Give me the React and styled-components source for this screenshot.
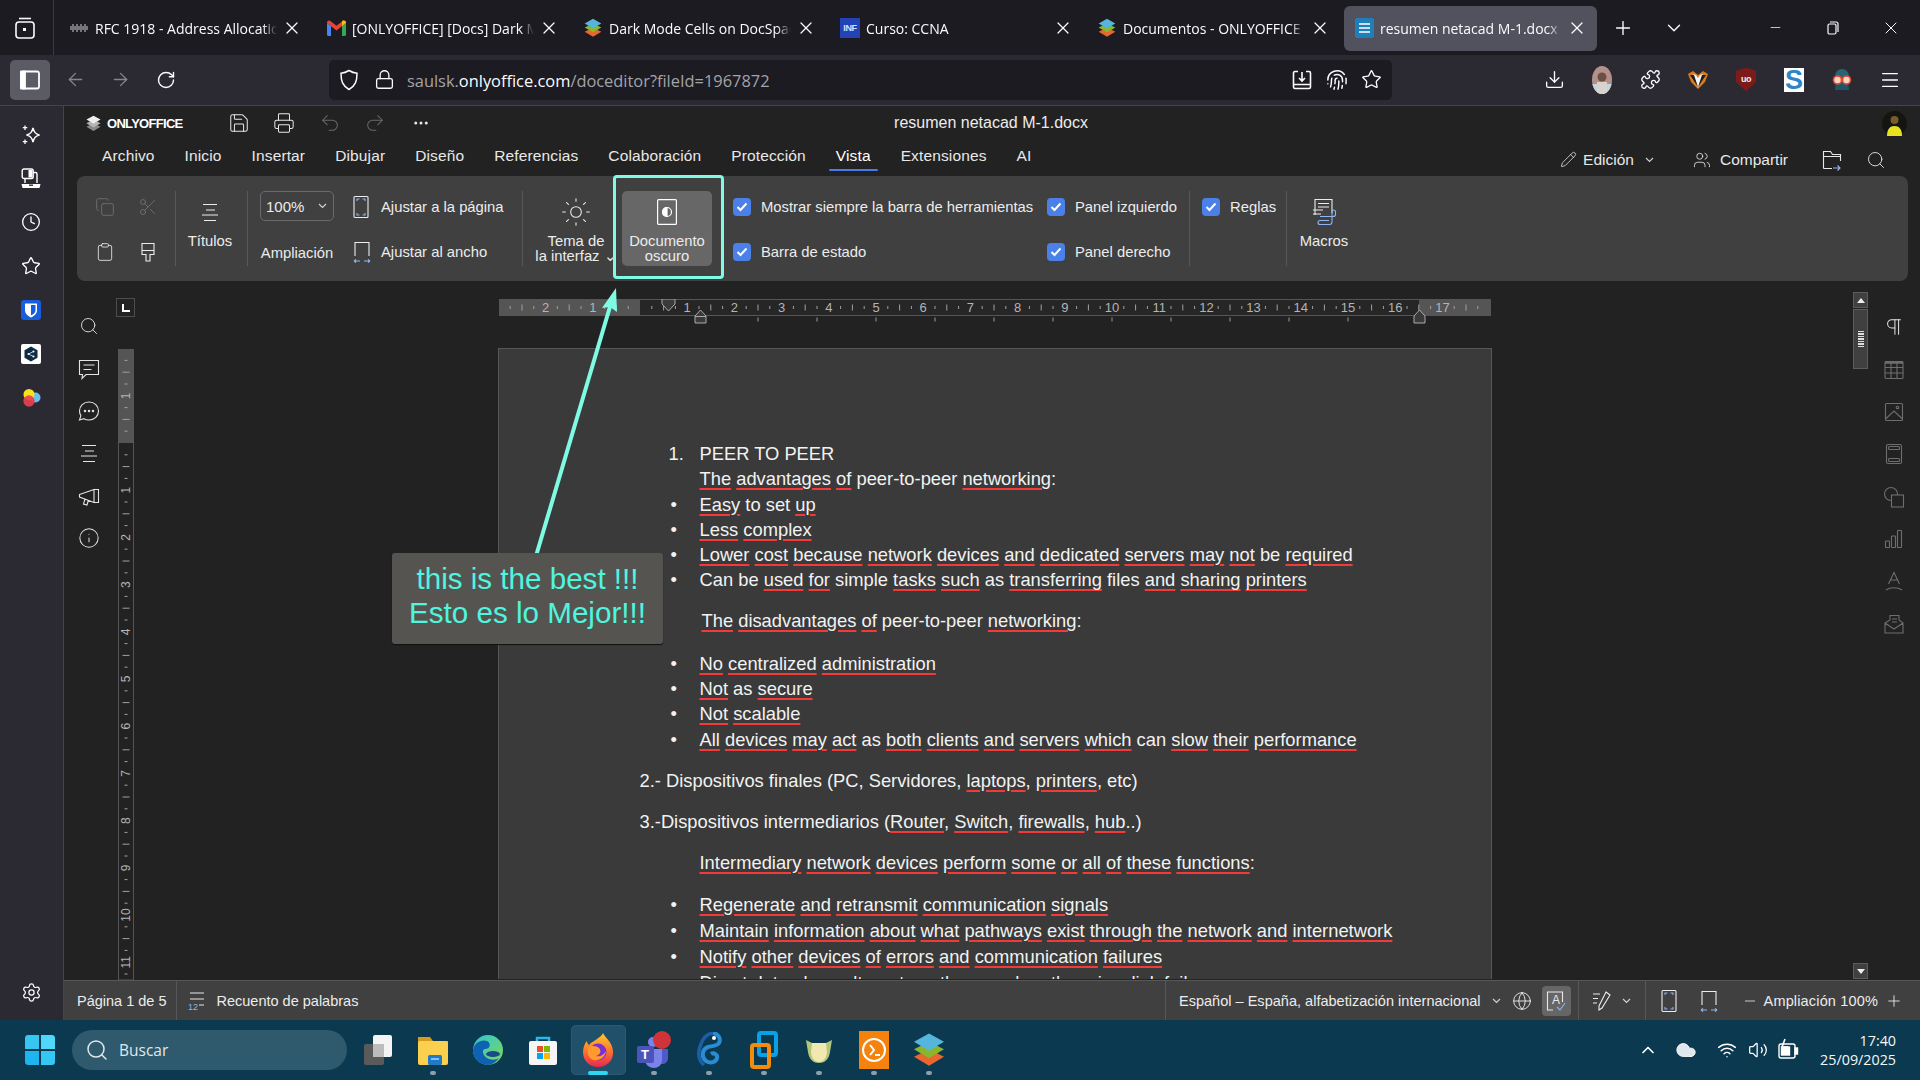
import React from "react";
import styled, { createGlobalStyle } from "styled-components";
import {
  ArrowLeft, ArrowRight, RotateCw, Lock, Fingerprint, Star, Download, Puzzle, Menu as MenuIcon, X, Plus,
  ChevronDown, ChevronUp, Minus, Save, Printer, Undo2, Redo2, Ellipsis, Search, Pencil, Users,
  Info, Settings, Clock, Globe, Wifi, Volume2, Cloud,
  Copy, Scissors, Clipboard, Sun, Pilcrow,
} from "lucide-react";

const Global = createGlobalStyle`
  html, body { margin: 0; padding: 0; background: #1c1b22; }
  * { box-sizing: border-box; }
  body { font-family: "Liberation Sans", Arial, sans-serif; color: #fff; }
`;

const Shell = styled.div`
  position: relative; width: 1920px; height: 1080px; overflow: hidden;
  display: flex; flex-direction: column; background: #1c1b22;
`;

/* ---------- browser tab strip ---------- */
const TabStrip = styled.div`
  height: 55px; flex: none; display: flex; align-items: center; background: #1c1b22;
  font-family: "Open Sans", sans-serif; font-size: 14px; color: #fbfbfe;
`;
const TabListBtn = styled.div`
  width: 54px; height: 55px; flex: none; display: flex; align-items: center; justify-content: center;
  border-right: 1px solid #3a3a42; padding-right: 3px;
`;
const Tabs = styled.div`display: flex; gap: 4px; margin-left: 5px; height: 45px; margin-top: 1px;`;
const Tab = styled.div`
  width: 253px; height: 45px; display: flex; align-items: center; gap: 6px; padding: 0 10px 0 ${p => p.$pad || 10}px;
  border-radius: 6px; background: ${p => (p.$active ? "#52525e" : "transparent")};
`;
const TabIcon = styled.span`width: 20px; height: 20px; flex: none; display: flex; align-items: center; justify-content: center;`;
const TabTitle = styled.span`
  flex: 1; min-width: 0; white-space: nowrap; overflow: hidden;
  -webkit-mask-image: linear-gradient(to right, #000 calc(100% - 14px), transparent);
  mask-image: linear-gradient(to right, #000 calc(100% - 14px), transparent);
`;
const TabClose = styled.span`flex: none; display: flex; margin-left: -1px;`;
const WinControls = styled.div`display: flex; align-items: center; height: 100%; margin-left: auto;`;
const StripBtn = styled.span`display: flex; align-items: center; justify-content: center; width: ${p => p.$w}px; margin-left: ${p => p.$ml || 0}px;`;

/* ---------- nav row ---------- */
const NavRow = styled.div`
  height: 51px; flex: none; display: flex; align-items: center; background: #2b2a33;
  border-bottom: 1px solid #45444d; padding-bottom: 1px;
`;
const SideToggle = styled.div`
  width: 40px; height: 40px; margin-left: 10px; border-radius: 5px; background: #5b5b66; margin-right: 3px;
  display: flex; align-items: center; justify-content: center;
`;
const NavBtn = styled.span`
  width: 45px; flex: none; display: flex; align-items: center; justify-content: center;
  color: ${p => (p.$dim ? "#85858c" : "#fbfbfe")};
`;
const UrlBar = styled.div`
  margin-left: 141px; width: 1063px; height: 40px; flex: none; background: #1c1b22; border-radius: 5px;
  display: flex; align-items: center; padding-left: 10px; color: #fbfbfe;
  font-family: "Open Sans", sans-serif; font-size: 16.4px;
`;
const UrlLead = styled.span`width: ${p => p.$w}px; flex: none; display: flex; justify-content: center;`;
const UrlText = styled.span`flex: 1; color: #a3a3a8; margin-left: -2px; padding-top: 2px; b { font-weight: 400; color: #fbfbfe; }`;
const ExtBtn = styled.span`width: ${p => p.$w || 48}px; flex: none; display: flex; justify-content: center; align-items: center;`;
const ExtRow = styled.div`display: flex; align-items: center; margin-left: 138px;`;

/* ---------- main area ---------- */
const Main = styled.div`flex: 1; min-height: 0; display: flex;`;
const BrowserRail = styled.div`
  width: 64px; flex: none; background: #2b2a33; display: flex; flex-direction: column; padding: 6px 0; border-right: 1px solid #45444d;
`;
const RailItem = styled.div`
  height: 44px; flex: none; display: flex; align-items: center; justify-content: center; margin-right: 1px;
  &:last-child { margin-top: auto; }
`;
const Editor = styled.div`flex: 1; min-width: 0; display: flex; flex-direction: column; background: #222222;`;

const Header = styled.div`
  height: 34px; flex: none; display: grid; grid-template-columns: 1fr auto 1fr; align-items: center; padding: 0 21px;
`;
const HeadLeft = styled.div`display: flex; align-items: center;`;
const Logo = styled.div`
  width: 131px; flex: none; display: flex; align-items: center; gap: 5px;
  font-size: 13px; font-weight: 700; letter-spacing: -0.7px; color: #fff;
`;
const HeadBtn = styled.span`width: 45.5px; flex: none; display: flex; justify-content: center; color: ${p => (p.$dim ? "#6a6a6a" : "#e8e8e8")};`;
const DocTitle = styled.div`font-size: 16px; color: #ececec; margin-right: 2px;`;
const HeadRight = styled.div`display: flex; justify-content: flex-end; margin-right: -8px;`;

const MenuBar = styled.div`height: 36px; flex: none; display: flex; align-items: flex-start; padding: 0 34px 0 23px; font-size: 15.5px; letter-spacing: .13px;`;
const MenuItem = styled.div`
  position: relative; height: 31px; padding: 0 15px; display: flex; align-items: center; color: ${p => (p.$active ? "#ffffff" : "#e8e8e8")};
  ${p => p.$active && `
    &::after { content: ""; position: absolute; left: 8px; right: 8px; bottom: 0; height: 2.5px; background: #4a7be8; border-radius: 2px; }
  `}
`;
const MenuRight = styled.div`
  margin-left: auto; height: 36px; display: flex; align-items: center; color: #e8e8e8; padding-top: 3px; letter-spacing: 0; font-size: 15.5px;
`;
const RightBtn = styled.span`display: flex; align-items: center; gap: ${p => p.$gap || 0}px; margin-left: ${p => p.$ml || 0}px;`;

/* ---------- toolbar panel ---------- */
const Panel = styled.div`
  height: 105px; flex: none; margin: 0 12px 0 13px; border-radius: 8px; background: #404040; display: flex;
  padding: 15px 0 13px; font-size: 14.8px; color: #ececec;
`;
const Sep = styled.div`width: 1px; height: 75px; flex: none; background: #585858;`;
const IconGrid = styled.div`
  width: 98px; flex: none; padding-left: 6px; display: grid; grid-template-columns: 43px 43px; grid-template-rows: 32px 32px; row-gap: 13px;
`;
const Cell = styled.div`display: flex; align-items: center; justify-content: center; color: ${p => (p.$dim ? "#727272" : "#ececec")};`;
const BigBtn = styled.div`
  width: ${p => p.$w}px; flex: none; margin-left: ${p => p.$ml || 0}px; padding-right: ${p => p.$pr || 0}px; height: 75px; padding-top: 5px; border-radius: 5px;
  display: flex; flex-direction: column; align-items: center; text-align: center; line-height: 15px; white-space: nowrap;
  background: ${p => (p.$on ? "#676767" : "transparent")};
`;
const BigIcon = styled.div`height: 32px; flex: none; display: flex; align-items: center; justify-content: center; margin-bottom: 6px;`;
const ZoomGroup = styled.div`
  width: 274px; flex: none; padding-left: 12px; display: grid; grid-template-columns: 74px 1fr; column-gap: 19px; grid-template-rows: 32px 32px; row-gap: 13px;
`;
const ZoomSel = styled.div`
  height: 30px; border: 1px solid #6a6a6a; border-radius: 5px; display: flex; align-items: center; justify-content: space-between; padding: 0 6px 0 5px; font-size: 15px;
`;
const ZoomLabel = styled.div`display: flex; align-items: center; justify-content: center; white-space: nowrap; margin-top: 2px;`;
const FitRow = styled.div`display: flex; align-items: center; gap: ${p => p.$gap || 12}px; white-space: nowrap;`;
const CheckGrid = styled.div`
  margin-left: 21px; width: 456px; flex: none; display: grid; grid-template-columns: 314px 142px; grid-template-rows: 32px 32px; row-gap: 13px;
`;
const CheckRow = styled.div`display: flex; align-items: center; gap: 10px; white-space: nowrap; height: 32px;`;
const Box = styled.span`
  width: 18px; height: 18px; flex: none; border-radius: 4px; background: #4a80e8; display: flex; align-items: center; justify-content: center;
`;
const RulesCol = styled.div`width: 96px; flex: none; padding-left: 12px;`;

/* ---------- workspace ---------- */
const Workspace = styled.div`flex: 1; min-height: 0; display: flex;`;
const LeftRail = styled.div`width: 50px; flex: none; padding-top: 24px; display: flex; flex-direction: column;`;
const SideIcon = styled.div`
  height: 42.4px; flex: none; display: flex; align-items: center; justify-content: center; color: ${p => (p.$dim ? "#6e6e6e" : "#e4e4e4")};
`;
const Canvas = styled.div`flex: 1; min-width: 0; display: flex;`;
const CanvasMain = styled.div`
  flex: 1; min-width: 0; padding-left: 2px; display: grid; grid-template-columns: 20px 1fr; grid-template-rows: 68px 631px;
`;
const Corner = styled.div`
  width: 19px; height: 19px; margin-top: 17px; border: 1px solid #4d4d4d; display: flex; align-items: center; justify-content: center;
`;
const CornerMark = styled.span`width: 8px; height: 8px; border-left: 2px solid #fff; border-bottom: 2px solid #fff;`;
const RulerWrap = styled.div`justify-self: center; padding-top: 18px;`;
const VRuler = styled.div`margin-left: 2px; width: 16px; height: 631px; overflow: hidden;`;
const PageWrap = styled.div`display: flex; justify-content: center; overflow: hidden; height: 631px; margin-top: -1px;`;
const Page = styled.div`
  width: 994px; height: 700px; flex: none; background: #3a3a3a; border: 1px solid #575757; padding: 92px 0 0 141px;
  font-size: 18.33px; line-height: 25.3px; color: #f2f2f2; white-space: nowrap;
`;
const DocLine = styled.div`
  display: flex; margin-top: ${p => p.$mt || 0}px; padding-left: ${p => p.$pl || 0}px;
`;
const Marker = styled.span`width: 60px; flex: none; padding-left: ${p => p.$ml || 30}px;`;
const Bad = styled.span`
  text-decoration: underline; text-decoration-color: #f23a3a; text-decoration-thickness: 1.5px; text-underline-offset: 2.5px;
`;
const Scroll = styled.div`width: 15px; flex: none; padding: 11px 0 1px; display: flex; flex-direction: column;`;
const ScrollBtn = styled.div`
  width: 15px; height: 16px; flex: none; background: #404040; border: 1px solid #5c5c5c; display: flex; align-items: center; justify-content: center;
  margin-top: ${p => (p.$end ? "auto" : "0")};
`;
const ScrollArrow = styled.span`
  width: 0; height: 0; border-left: 4px solid transparent; border-right: 4px solid transparent;
  ${p => (p.$down ? "border-top: 5px solid #eee;" : "border-bottom: 5px solid #eee;")}
`;
const ScrollThumb = styled.div`
  height: 60px; flex: none; margin-top: 1px; background: #404040; border: 1px solid #5c5c5c; display: flex; flex-direction: column; align-items: center; justify-content: center; gap: 1.3px;
`;
const Grip = styled.span`width: 6px; height: 1.2px; background: #ddd;`;
const RightRail = styled.div`width: 52px; flex: none; padding-top: 25px; display: flex; flex-direction: column;`;

/* ---------- status bar ---------- */
const StatusBar = styled.div`
  height: 40px; flex: none; background: #404040; border-top: 1px solid #575757; display: flex; align-items: center; font-size: 14.5px; color: #ececec;
`;
const StatusText = styled.span`margin-left: ${p => p.$ml || 0}px; white-space: nowrap; letter-spacing: ${p => p.$ls || 0}px;`;
const StatusSep = styled.span`width: 1px; height: 39px; flex: none; background: #575757; margin-left: ${p => p.$ml || 0}px;`;
const StatusIcon = styled.span`
  flex: none; display: flex; align-items: center; justify-content: center; width: ${p => p.$w || 24}px; margin-left: ${p => p.$ml || 0}px;
`;
const SpellBtn = styled.span`
  width: 29px; height: 30px; flex: none; margin-left: ${p => p.$ml || 0}px; border-radius: 4px; background: #666; display: flex; align-items: center; justify-content: center;
`;
const StatusRight = styled.div`margin-left: auto; display: flex; align-items: center; height: 100%; padding-right: 14px;`;

/* ---------- taskbar ---------- */
const Taskbar = styled.div`
  height: 60px; flex: none; background: #0b3a50; display: flex; align-items: center; color: #fff;
`;
const WinBtn = styled.span`margin-left: 25px; display: flex;`;
const SearchPill = styled.div`
  width: 275px; height: 40px; margin-left: 17px; border-radius: 20px; background: #2f5a6d; display: flex; align-items: center; padding-left: 13px; gap: 10px;
  font-family: "Open Sans", sans-serif; font-size: 15.5px; color: #dfe8ec;
`;
const TaskIcons = styled.div`display: flex; margin-left: 3px; align-items: center; height: 100%;`;
const TaskIcon = styled.div`
  position: relative; width: 55.2px; height: 50px; flex: none; display: flex; align-items: center; justify-content: center; border-radius: 5px;
  ${p => p.$on && "background: #21506a; outline: 1px solid #2c5a72; outline-offset: -1px;"}
`;
const TaskDot = styled.span`
  position: absolute; bottom: 0; left: 50%; transform: translateX(-50%); height: 4px; border-radius: 2px;
  width: ${p => (p.$on ? 20 : 6)}px; background: ${p => (p.$on ? "#2fd6f2" : "#8aa0ab")};
`;
const Tray = styled.div`margin-left: auto; display: flex; align-items: center; padding-right: 24px;`;
const TrayIcon = styled.span`display: flex; justify-content: center; width: ${p => p.$w}px;`;
const Clockbox = styled.div`
  margin-left: 18px; text-align: right; font-family: "Open Sans", sans-serif; font-size: 14.3px; line-height: 19.5px; color: #f4f7f8;
`;

/* ---------- annotation overlay ---------- */
const Highlight = styled.div`
  position: absolute; left: 613px; top: 175px; width: 111px; height: 104px; border: 3.5px solid #7ffbe4; border-radius: 4px;
`;
const ArrowSvg = styled.svg`position: absolute; left: 520px; top: 280px;`;
const Callout = styled.div`
  position: absolute; left: 392px; top: 553px; width: 271px; height: 91px; background: #555450; border-radius: 3px; padding-bottom: 5px;
  box-shadow: 0 1px 1px #111; display: flex; flex-direction: column; align-items: center; justify-content: center;
  font-size: 29.6px; line-height: 34px; color: #4ff5de; white-space: nowrap;
`;

/* ---------- drawings ---------- */
const Stack = ({ s = 22, mono }) => (
  <svg width={s} height={s} viewBox="0 0 24 24">
    <path d="M2 16.500L7 14l5 2.500 5-2.500 5 2.500-10 6z" fill={mono ? "#8a8a8a" : "#e8662f"} />
    <path d="M2 11.500L7 9l5 2.500L17 9l5 2.500-10 6z" fill={mono ? "#b5b5b5" : "#8ab62f"} />
    <path d="M2 6.500L12 1l10 5.500-10 6z" fill={mono ? "#eeeeee" : "#55b5dd"} />
  </svg>
);
const Gmail = () => (
  <svg width="19" height="16" viewBox="0 0 19 16">
    <path d="M0 3v11.500A1.500 1.500 0 0 0 1.500 16H4V6z" fill="#4285f4" />
    <path d="M15 6v10h2.500a1.500 1.500 0 0 0 1.500-1.500V3z" fill="#34a853" />
    <path d="M0 2.500C0 .8 2 0 3 .8l6.500 5L16 .8c1-.8 3 0 3 1.700V3l-3.900 3L9.500 10.500 4 6.300 0 3z" fill="#ea4335" />
    <path d="M15 .8h1c1-.8 3 0 3 1.700V3l-4 3z" fill="#fbbc04" />
  </svg>
);
const Rfc = () => (
  <svg width="18" height="10" viewBox="0 0 18 10" stroke="#cfcfcf" strokeWidth="1">
    {[1, 3, 5, 7, 9, 11, 13, 15, 17].map((x, i) => (<path key={x} d={`M${x} ${i % 2 ? 1 : 3}V${i % 2 ? 9 : 7}`} />))}
  </svg>
);
const InfBadge = styled.span`
  width: 20px; height: 20px; background: #2242b8; color: #d8e2ff; font: 700 9px "Liberation Sans", sans-serif; display: flex; align-items: center; justify-content: center; letter-spacing: -0.3px;
`;
const DocFav = () => (
  <svg width="19" height="20" viewBox="0 0 19 20">
    <rect width="19" height="20" rx="2" fill="#1f7fb8" />
    <path d="M4 6h11M4 10h11M4 14h11" stroke="#fff" strokeWidth="1.5" />
  </svg>
);
const ListTabs = () => (
  <svg width="20" height="22" viewBox="0 0 20 22" fill="none" stroke="#fbfbfe" strokeWidth="1.6">
    <rect x="1" y="5" width="18" height="16" rx="3" /><path d="M4 1.500h12" /><rect x="8" y="11" width="3" height="3" fill="#fbfbfe" stroke="none" />
  </svg>
);
const SideGlyph = () => (
  <svg width="20" height="20" viewBox="0 0 20 20" fill="none" stroke="#fff" strokeWidth="1.8">
    <rect x="1" y="1.500" width="18" height="17" rx="2" /><rect x="1" y="1.500" width="4" height="17" fill="#fff" />
  </svg>
);
const Shield = ({ c = "#fbfbfe" }) => (
  <svg width="20" height="22" viewBox="0 0 20 22" fill="none" stroke={c} strokeWidth="1.5">
    <path d="M10 1.500c3 1.800 5 2.400 8 2.700 0 8-1.500 12.500-8 16.300C3.500 16.700 2 12.200 2 4.200c3-.3 5-.9 8-2.700z" />
  </svg>
);
const Install = () => (
  <svg width="20" height="20" viewBox="0 0 20 20" fill="none" stroke="#fbfbfe" strokeWidth="1.600">
    <path d="M6 1.500H3A1.500 1.500 0 0 0 1.500 3v14A1.500 1.500 0 0 0 3 18.500h14a1.500 1.500 0 0 0 1.500-1.500V3A1.500 1.500 0 0 0 17 1.500h-3M1.500 14.500h17" />
    <path d="M10 2v8M7 8l3 3 3-3" />
  </svg>
);
const RestoreIcon = () => (
  <svg width="14" height="14" viewBox="0 0 14 14" fill="none" stroke="#fbfbfe" strokeWidth="1.200">
    <rect x="2" y="3" width="8" height="10" rx="1.500" /><path d="M4 1h6a2 2 0 0 1 2 2v8" />
  </svg>
);
const Badger = () => (
  <svg width="22" height="22" viewBox="0 0 22 22">
    <path d="M1 5l5-3 5 4 5-4 5 3-3 8-7 7-7-7z" fill="#d97a1f" />
    <path d="M6 5l5 14 5-14-3 1-2 3-2-3z" fill="#f5f5f5" /><path d="M3 6l4 0 4 12z" fill="#1d1d1d" /><path d="M19 6h-4l-4 12z" fill="#1d1d1d" />
  </svg>
);
const UBlock = styled.span`
  width: 20px; height: 24px; background: #7d1a1a; clip-path: polygon(50% 0, 100% 14%, 100% 60%, 50% 100%, 0 60%, 0 14%);
  font: 700 9px "Liberation Sans", sans-serif; color: #eee; display: flex; justify-content: center; padding-top: 6px; letter-spacing: -.5px;
`;
const SBadge = styled.span`
  width: 20px; height: 24px; background: #fff; color: #2f86c6; font: 900 27px/24px "Liberation Sans", sans-serif; text-align: center; overflow: hidden;
`;
const Glasses = () => (
  <svg width="22" height="24" viewBox="0 0 22 24">
    <path d="M4 22c0-6 1-8 7-8s7 2 7 8z" fill="#1f5566" /><circle cx="11" cy="8" r="7" fill="#2a6474" />
    <circle cx="6.500" cy="12" r="4" fill="#fbd3c2" stroke="#e04b2e" strokeWidth="1.600" /><circle cx="15.500" cy="12" r="4" fill="#fbd3c2" stroke="#e04b2e" strokeWidth="1.600" />
  </svg>
);
const PersonPhoto = () => (
  <svg width="20" height="28" viewBox="0 0 20 28">
    <defs><clipPath id="ph"><ellipse cx="10" cy="14" rx="10" ry="14" /></clipPath></defs>
    <g clipPath="url(#ph)"><rect width="20" height="28" fill="#b3918a" /><rect y="18" width="20" height="10" fill="#c7d4dc" /><circle cx="10" cy="11" r="4.500" fill="#6c4f42" /><rect x="5" y="16" width="10" height="12" fill="#d9d3cd" /></g>
  </svg>
);
const Bitwarden = () => (
  <svg width="20" height="20" viewBox="0 0 20 20">
    <rect width="20" height="20" rx="3" fill="#175ddc" /><path d="M4 3.500h12v7c0 3.500-3 5.500-6 7-3-1.500-6-3.500-6-7z" fill="#fff" /><path d="M10 5h4.500v5.500c0 2.300-2.200 3.800-4.500 5z" fill="#175ddc" />
  </svg>
);
const DeepL = () => (
  <svg width="20" height="20" viewBox="0 0 20 20">
    <rect width="20" height="20" rx="2" fill="#fff" /><path d="M10 2.500l6.500 3.700v7.600L10 17.500l-6.500-3.700V6.200z" fill="#0f2b46" />
    <circle cx="7.500" cy="10" r="1" fill="#fff" /><circle cx="12.500" cy="7.500" r="1" fill="#fff" /><circle cx="12.500" cy="12.500" r="1" fill="#fff" /><path d="M7.500 10l5-2.500M7.500 10l5 2.500" stroke="#fff" strokeWidth=".7" />
  </svg>
);
const Tricolor = () => (
  <svg width="20" height="20" viewBox="0 0 20 20">
    <circle cx="14.500" cy="9.500" r="5" fill="#67c0ef" /><circle cx="8" cy="6.500" r="5.500" fill="#f7e21f" /><circle cx="8" cy="13" r="5.700" fill="#e8404f" opacity=".92" />
  </svg>
);
const TabSync = () => (
  <svg width="20" height="21" viewBox="0 0 20 21" fill="none" stroke="#fff" strokeWidth="1.400">
    <rect x="1.200" y="1" width="11" height="9.500" rx="1.800" /><rect x="7.500" y="2" width="4" height="7.500" fill="#fff" stroke="none" />
    <path d="M12 4.500h2.500a1.500 1.500 0 0 1 1.500 1.500v9M4 10.500V15" /><path d="M.5 16h19l-1 4H1.500z" fill="#fff" stroke="none" /><rect x="8" y="16.500" width="4" height="1.400" fill="#2b2a33" stroke="none" />
  </svg>
);
const Spark4 = () => (
  <svg width="21" height="21" viewBox="0 0 21 21" fill="none" stroke="#fff" strokeWidth="1.500">
    <path d="M12 4c1 4.500 2.500 6 6.500 7-4 1-5.500 2.500-6.500 7-1-4.500-2.500-6-6.500-7 4-1 5.500-2.500 6.500-7z" />
    <path d="M4 1.500v4.500M1.800 3.700h4.500M4 15.500v4.500M1.800 17.700h4.500" strokeWidth="1.300" />
  </svg>
);

const Ln = ({ w = 22, h = 22, sw = 1.100, c = "currentColor", children }) => (
  <svg width={w} height={h} viewBox={`0 0 ${w} ${h}`} fill="none" stroke={c} strokeWidth={sw}>{children}</svg>
);
const Blue = "#8fb4ee";
const AlignGlyph = () => (<Ln><path d="M4 3.500h14M7 9h9M3 14h16M5 19.500h12" /></Ln>);
const Brush = () => (<Ln w={18} h={22}><path d="M3 2.500h12v11H11v6.500H7v-6.500H3zM3 9.500h12" /></Ln>);
const FitPage = ({ c = "currentColor" }) => (
  <Ln w={16} h={24} c={c}><rect x="1" y="1.500" width="14" height="21" rx="1" /><path d="M4 6V4h2.500M12 6V4H9.500M4 18v2h2.500M12 18v2H9.500" stroke={Blue} /></Ln>
);
const FitWidth = ({ c = "currentColor" }) => (
  <Ln w={18} h={24} c={c}><path d="M2 16V2.500h14V16" /><path d="M1 21h6M1 21l2-1.700M1 21l2 1.700M17 21h-6M17 21l-2-1.700M17 21l-2 1.700" stroke={Blue} /></Ln>
);
const Contrast = () => (
  <svg width="20" height="26" viewBox="0 0 20 26" fill="none" stroke="#fff" strokeWidth="1.200">
    <rect x=".6" y=".6" width="18.800" height="24.800" rx="1" /><circle cx="10" cy="13" r="4.500" /><path d="M10 8.500a4.500 4.500 0 0 0 0 9z" fill="#fff" />
  </svg>
);
const MacroGlyph = () => (
  <Ln w={26} h={30}>
    <path d="M4 18V2.500h17V16" /><path d="M7 6.500h11M7 10h11M2 13h10M2 17h8" />
    <path d="M9 19.500h13c1.500 0 2.500-.8 2.500-2v-3c0-1-.8-1.500-2-1.500S21 14 21 15.500V25c0 1.500-1 2.500-2.500 2.500H9c-1.500 0-2-1-2-2 0-1 .5-2 2-2h9" stroke={Blue} />
  </Ln>
);
const Check = () => (<svg width="12" height="10" viewBox="0 0 12 10" fill="none" stroke="#fff" strokeWidth="2"><path d="M1.500 5l3 3 6-6.500" /></svg>);
const ChevSmall = () => (<svg width="9" height="6" viewBox="0 0 9 6" fill="none" stroke="#d0d0d0" strokeWidth="1.200"><path d="M1 1l3.500 3.500L8 1" /></svg>);
const FolderShare = () => (
  <Ln w={20} h={22}><path d="M1.500 19.500V2.500h7l2 3h8V12M1.500 7.500h17M1.500 19.500H10" /><path d="M11 19h7M15.500 16.500L18 19l-2.500 2.500" stroke={Blue} /></Ln>
);
const CommentGlyph = () => (<Ln><path d="M1.500 2.500h19v14H8l-4 4 .5-4h-3zM5.500 7h11M5.500 11.500h8" /></Ln>);
const ChatGlyph = () => (
  <Ln><path d="M11 2c5.500 0 9.500 4 9.500 9s-4 9-9.500 9c-2 0-3.500-.4-5-1.300L1.500 20l1.400-4.300A9 9 0 0 1 1.500 11C1.500 6 5.500 2 11 2z" /><circle cx="7" cy="11" r=".7" fill="currentColor" /><circle cx="11" cy="11" r=".7" fill="currentColor" /><circle cx="15" cy="11" r=".7" fill="currentColor" /></Ln>
);
const HornGlyph = () => (<Ln><path d="M1.500 9.500L16 4.500v13l-14.500-5.500zM16 4.500h4.500v13H16M7 14l-1.500 5 3.500 1 1.300-4.500" /></Ln>);
const MailGlyph = () => (<Ln><path d="M2 10l5-3v-4.500h9V7l4 3v10H2zM2 10l9 6 9-6M9 6h5M9 9h5" /></Ln>);
const TableGlyph = () => (<Ln w={20} h={20}><rect x="1" y="1.500" width="18" height="17" rx="1" /><path d="M1 7.500h18M1 13h18M7 2v16M13 2v16" /><path d="M1 2.500h18" strokeWidth="2.500" /></Ln>);
const ImageGlyph = () => (<Ln w={20} h={20}><rect x="1.500" y="1.500" width="17" height="17" rx="1" /><path d="M1.500 17L10 9l8.500 8" /><circle cx="13.500" cy="5.500" r="1.300" /></Ln>);
const HeaderGlyph = () => (<Ln w={18} h={22}><rect x="1.500" y="1.500" width="15" height="19" rx="1.500" /><rect x="3.500" y="3.500" width="11" height="3" rx="1" /><rect x="3.500" y="15.500" width="11" height="3" rx="1" /></Ln>);
const ShapeGlyph = () => (<Ln><circle cx="8" cy="8" r="6.500" /><rect x="8.500" y="9" width="12" height="12" fill="#222" /></Ln>);
const ChartGlyph = () => (<Ln w={20} h={20}><rect x="1.500" y="12" width="4" height="6.500" rx=".5" /><rect x="7.500" y="7" width="4" height="11.500" rx=".5" /><rect x="13.500" y="1.500" width="4" height="17" rx=".5" /></Ln>);
const ArtGlyph = () => (<Ln w={18} h={22}><path d="M3.500 13L9 1.500 14.500 13M5.500 9h7M1 19c4-3 12-3 16 0" /></Ln>);
const WordCount = () => (
  <svg width="18" height="20" viewBox="0 0 18 20"><path d="M2 2h14M2 8h14M11 14h5" stroke="#e8e8e8" strokeWidth="1.200" /><text x="0" y="19" fontSize="9" fill={Blue} fontFamily="Liberation Sans">12</text></svg>
);
const TrackGlyph = () => (<Ln w={20} h={22}><path d="M1 4h7M1 8.500h5M1 13h4" /><path d="M14 2l4 3-8 13-3 2 0-4z" /></Ln>);
const SpellGlyph = () => (
  <svg width="20" height="22" viewBox="0 0 20 22" fill="none" stroke="#e8e8e8" strokeWidth="1.100">
    <path d="M7 20H1.500V2h15V12" /><text x="6" y="14" fontSize="12" fill="#e8e8e8" stroke="none" fontFamily="Liberation Sans">A</text>
    <path d="M11 17l3 3 5-7" stroke={Blue} />
  </svg>
);
const WinLogo = () => (
  <svg width="30" height="30" viewBox="0 0 30 30">
    <path d="M0 3c0-1.700 1.300-3 3-3h11v14H0z" fill="#35c6f4" /><path d="M16 0h11c1.700 0 3 1.300 3 3v11H16z" fill="#50d8fa" />
    <path d="M0 16h14v14H3c-1.700 0-3-1.300-3-3z" fill="#1eb5ee" /><path d="M16 16h14v11c0 1.700-1.300 3-3 3H16z" fill="#35c6f4" />
  </svg>
);
const TaskView = () => (
  <svg width="30" height="30" viewBox="0 0 30 30"><rect x="10" y="0" width="19" height="22" rx="2" fill="#f4f4f4" /><rect x="1" y="9" width="20" height="21" rx="2" fill="#5a5a5a" /><rect x="10" y="9" width="11" height="13" fill="#bcbcbc" /></svg>
);
const FolderApp = () => (
  <svg width="32" height="30" viewBox="0 0 32 30"><path d="M1 2h12l3 4h15v5H1z" fill="#d69a1e" /><rect x="1" y="6" width="30" height="24" rx="2" fill="#fcd04f" /><rect x="11" y="20" width="14" height="10" rx="1.500" fill="#1f7ac8" /><rect x="14" y="23" width="8" height="2" fill="#7fc2f0" /></svg>
);
const Edge = () => (
  <svg width="30" height="32" viewBox="0 0 30 32">
    <defs><linearGradient id="ed" x1="0" y1="0" x2="1" y2="1"><stop offset="0" stopColor="#2fc5d6" /><stop offset="1" stopColor="#7ed957" /></linearGradient></defs>
    <circle cx="15" cy="16" r="15" fill="url(#ed)" /><path d="M15 31C6 31 0 24 0 16 1 9 8 5 14 7c4 1.500 4 8-2 8-3 0-3 6 2 9 4 2.500 9 2 12 0-3 4-7 7-11 7z" fill="#0f62b2" /><ellipse cx="20" cy="20" rx="7" ry="3" fill="#1a4a8a" />
  </svg>
);
const StoreApp = () => (
  <svg width="30" height="30" viewBox="0 0 30 30"><path d="M9 7V3h12v4" fill="none" stroke="#32b4e8" strokeWidth="2.500" /><rect x="1" y="6" width="28" height="24" rx="2" fill="#f5f5f5" /><rect x="9" y="11" width="6" height="6" fill="#e8502a" /><rect x="16" y="11" width="6" height="6" fill="#7fba00" /><rect x="9" y="18" width="6" height="6" fill="#00a4ef" /><rect x="16" y="18" width="6" height="6" fill="#ffb900" /></svg>
);
const Firefox = () => (
  <svg width="32" height="34" viewBox="0 0 32 34">
    <defs><linearGradient id="ff" x1="0" y1="0" x2="0" y2="1"><stop offset="0" stopColor="#ffcb2f" /><stop offset=".5" stopColor="#ff7a2a" /><stop offset="1" stopColor="#e7284f" /></linearGradient></defs>
    <path d="M21 0c2 5 9 8 10 18 1 10-7 16-15 16S1 28 1 19c0-5 2-9 4-11 0 2 1 3 2 4 2-3 6-4 8-6 2-2 5-3 6-6z" fill="url(#ff)" />
    <circle cx="16" cy="19" r="8.500" fill="#7b2fd6" /><path d="M7 14c4-2 8-1 10 1 3 3 1 7-3 8 4 1 8-1 10-5-1 7-7 10-12 9-5-1-8-7-5-13z" fill="#ff9a2f" />
  </svg>
);
const Teams = () => (
  <svg width="36" height="38" viewBox="0 0 36 38">
    <circle cx="17" cy="11" r="5" fill="#7b83eb" /><circle cx="27" cy="13" r="4" fill="#5059c9" /><path d="M20 18h12v9c0 4-3 6-6 6s-6-2-6-6z" fill="#5059c9" /><path d="M9 18h17v11c0 5-4 8-8 8s-9-3-9-8z" fill="#7b83eb" /><rect x="1" y="15" width="17" height="17" rx="2" fill="#4b53bc" /><text x="5" y="28" fontSize="13" fontWeight="700" fill="#fff" fontFamily="Liberation Sans">T</text>
    <ellipse cx="26" cy="9" rx="9" ry="9" fill="#d13438" />
  </svg>
);
const Gecko = () => (
  <svg width="28" height="36" viewBox="0 0 28 36" fill="none">
    <path d="M18 1c6 1 8 6 6 10-2 3-7 3-11 4-6 2-7 10-2 14 5 3 10 1 11-3 .8-3-3-6-6-4" stroke="#2a8dd4" strokeWidth="4" />
    <path d="M18 1C11 2 8 6 6 12 3 19 2 27 9 33" stroke="#1a5fa8" strokeWidth="3.500" /><circle cx="19" cy="6" r="2" fill="#fff" />
  </svg>
);
const Vbox = () => (
  <svg width="30" height="38" viewBox="0 0 30 38" fill="none"><rect x="10" y="2" width="17" height="22" rx="2" stroke="#0aa0e6" strokeWidth="4" /><rect x="3" y="14" width="17" height="22" rx="2" stroke="#f38b0c" strokeWidth="4" /></svg>
);
const Cat = () => (
  <svg width="28" height="28" viewBox="0 0 28 28"><path d="M1 4l6 3h14l6-3-2 12c-1 8-6 11-11 11S4 24 3 16z" fill="#b3c77a" /><path d="M7 7h14l1 10c-1 6-4 9-8 9s-7-3-8-9z" fill="#f1e7b0" /></svg>
);
const Terminal = () => (
  <svg width="30" height="38" viewBox="0 0 30 38"><rect width="30" height="38" fill="#f5820d" /><circle cx="15" cy="19" r="11" fill="none" stroke="#fff" strokeWidth="2" /><path d="M11 14l4 5-4 5M16 24h5" fill="none" stroke="#fff" strokeWidth="2" /></svg>
);
const TrayBattery = () => (
  <svg width="22" height="26" viewBox="0 0 22 26" fill="none" stroke="#fff" strokeWidth="1.400"><rect x="2" y="7" width="16" height="14" rx="2" /><rect x="18" y="11" width="2.500" height="6" fill="#fff" /><rect x="4.500" y="10" width="8" height="8" fill="#fff" /><path d="M8 2L5 10h5l-2 6" strokeWidth="1.600" /></svg>
);

const cm = 47.2;
const HRuler = () => {
  const W = 992, zero = 141;
  const ticks = [];
  for (let q = -11; q <= 71; q++) {
    const x = zero + q * cm / 4;
    if (x < 4 || x > W - 4 || q % 4 === 0) continue;
    const mid = ((q % 4) + 4) % 4 === 2;
    ticks.push(<path key={q} d={`M${x} ${mid ? 5.500 : 7}V${mid ? 11.500 : 10}`} stroke="#a0a0a0" strokeWidth="1" />);
  }
  const nums = [-2, -1, 1, 2, 3, 4, 5, 6, 7, 8, 9, 10, 11, 12, 13, 14, 15, 16, 17];
  const stops = [];
  for (let i = 0; i < 12; i++) stops.push(<path key={i} d={`M${200 + i * 59} 18.500v4`} stroke="#9a9a9a" strokeWidth="1" />);
  return (
    <svg width={W} height={26} viewBox={`0 0 ${W} 26`} style={{ display: "block" }}>
      <rect x=".5" y=".5" width={W - 1} height="16" fill="#262626" stroke="#555" />
      <rect x="0" y="0" width={zero} height="17" fill="#555" />
      <rect x={920} y="0" width={W - 920} height="17" fill="#555" />
      {ticks}
      {nums.map(n => (
        <text key={n} x={zero + n * cm} y="13" textAnchor="middle" fontSize="13" fill="#b4b4b4" fontFamily="Liberation Sans">{Math.abs(n)}</text>
      ))}
      {stops}
      <path d="M163 0h13v5l-6.500 7-6.500-7z" fill="#3a3a3a" stroke="#aaa" />
      <path d="M196 17l5.500-6 5.500 6v7h-11z" fill="#3a3a3a" stroke="#aaa" /><path d="M196 17.500h11" stroke="#aaa" />
      <path d="M915 17l5.500-6 5.500 6v7h-11z" fill="#3a3a3a" stroke="#aaa" />
    </svg>
  );
};
const VRulerArt = () => {
  const zero = 94;
  const H = 631, ticks = [];
  for (let q = -7; q <= 47; q++) {
    if (q % 4 === 0) continue;
    const y = zero + q * cm / 4;
    const mid = ((q % 4) + 4) % 4 === 2;
    ticks.push(<path key={q} d={`M${mid ? 4.500 : 6.500} ${y}H${mid ? 11.500 : 9.500}`} stroke="#a0a0a0" strokeWidth="1" />);
  }
  const nums = [-1, 1, 2, 3, 4, 5, 6, 7, 8, 9, 10, 11];
  return (
    <svg width="16" height={H} viewBox={`0 0 16 ${H}`} style={{ display: "block" }}>
      <rect x=".5" y="0" width="15" height={H} fill="#222" stroke="#555" />
      <rect x="0" y="0" width="16" height={zero} fill="#555" />
      {ticks}
      {nums.map(n => (
        <text key={n} x="8" y={zero + n * cm + 4} textAnchor="middle" fontSize="12" fill="#b4b4b4" fontFamily="Liberation Sans" transform={`rotate(-90 8 ${zero + n * cm})`}>{Math.abs(n)}</text>
      ))}
    </svg>
  );
};

/* doc text: words wrapped in *...* carry the spell-check underline */
const Marked = ({ t }) => (
  <span>{t.split(/(\*[^*]+\*)/).map((s, i) => (s.startsWith("*") ? <Bad key={i}>{s.slice(1, -1)}</Bad> : s))}</span>
);
const doc = [
  { m: "1.", t: "PEER TO PEER" },
  { m: " ", t: "*The* *advantages* *of* peer-to-peer *networking*:" },
  { m: "•", t: "*Easy* to set *up*" },
  { m: "•", t: "*Less* *complex*" },
  { m: "•", t: "*Lower* *cost* *because* *network* *devices* *and* *dedicated* *servers* *may* *not* be *required*" },
  { m: "•", t: "Can be *used* *for* simple *tasks* *such* as *transferring* files *and* *sharing* *printers*" },
  { pl: 62, mt: 15.5, t: "*The* *disadvantages* *of* peer-to-peer *networking*:" },
  { m: "•", mt: 17, t: "*No* *centralized* *administration*" },
  { m: "•", t: "*Not* as *secure*" },
  { m: "•", t: "*Not* *scalable*" },
  { m: "•", mt: 0.8, t: "*All* *devices* *may* *act* as *both* *clients* *and* *servers* *which* can *slow* *their* *performance*" },
  { mt: 15.5, t: "2.- Dispositivos finales (PC, Servidores, *laptops*, *printers*, etc)" },
  { mt: 16, t: "3.-Dispositivos intermediarios (*Router*, *Switch*, *firewalls*, *hub*..)" },
  { pl: 60, mt: 15, t: "*Intermediary* *network* *devices* *perform* *some* *or* *all* *of* *these* *functions*:" },
  { m: "•", mt: 17, t: "*Regenerate* *and* *retransmit* *communication* *signals*" },
  { m: "•", mt: 0.8, t: "*Maintain* *information* *about* *what* *pathways* *exist* *through* *the* *network* *and* *internetwork*" },
  { m: "•", mt: 0.8, t: "*Notify* *other* *devices* *of* *errors* *and* *communication* *failures*" },
  { m: "•", mt: 0.5, t: "Direct data along alternate pathways when there is a link failure" },
];

const tabs = [
  { icon: <Rfc />, title: "RFC 1918 - Address Allocation for Private Internets" },
  { icon: <Gmail />, title: "[ONLYOFFICE] [Docs] Dark Mode is here" },
  { icon: <Stack s={22} />, title: "Dark Mode Cells on DocSpace rooms" },
  { icon: <InfBadge>INF</InfBadge>, title: "Curso: CCNA" },
  { icon: <Stack s={22} />, title: "Documentos - ONLYOFFICE" },
  { icon: <DocFav />, title: "resumen netacad M-1.docx", active: true, pad: 10 },
];
const menus = ["Archivo", "Inicio", "Insertar", "Dibujar", "Diseño", "Referencias", "Colaboración", "Protección", "Vista", "Extensiones", "AI"];

export default function App() {
  return (
    <Shell>
      <Global />
      <TabStrip>
        <TabListBtn><ListTabs /></TabListBtn>
        <Tabs>
          {tabs.map(t => (
            <Tab key={t.title} $active={t.active} $pad={t.pad}>
              <TabIcon>{t.icon}</TabIcon>
              <TabTitle>{t.title}</TabTitle>
              <TabClose><X size={20} strokeWidth={1.5} /></TabClose>
            </Tab>
          ))}
        </Tabs>
        <StripBtn $w={24} $ml={14}><Plus size={22} strokeWidth={1.5} /></StripBtn>
        <StripBtn $w={24} $ml={27}><ChevronDown size={22} strokeWidth={1.5} /></StripBtn>
        <WinControls>
          <StripBtn $w={58}><Minus size={15} strokeWidth={1.2} /></StripBtn>
          <StripBtn $w={58}><RestoreIcon /></StripBtn>
          <StripBtn $w={58}><X size={20} strokeWidth={1.2} /></StripBtn>
        </WinControls>
      </TabStrip>

      <NavRow>
        <SideToggle><SideGlyph /></SideToggle>
        <NavBtn $dim><ArrowLeft size={21} strokeWidth={1.5} /></NavBtn>
        <NavBtn $dim><ArrowRight size={21} strokeWidth={1.5} /></NavBtn>
        <NavBtn><RotateCw size={20} strokeWidth={1.7} /></NavBtn>
        <UrlBar>
          <UrlLead $w={20}><Shield /></UrlLead>
          <UrlLead $w={50}><Lock size={21} strokeWidth={1.5} /></UrlLead>
          <UrlText>saulsk.<b>onlyoffice.com</b>/doceditor?fileId=1967872</UrlText>
          <ExtBtn $w={35}><Install /></ExtBtn>
          <ExtBtn $w={35}><Fingerprint size={22} strokeWidth={1.6} /></ExtBtn>
          <ExtBtn $w={35}><Star size={21} strokeWidth={1.5} /></ExtBtn>
          <ExtBtn $w={3} />
        </UrlBar>
        <ExtRow>
          <ExtBtn><Download size={21} strokeWidth={1.5} /></ExtBtn>
          <ExtBtn><PersonPhoto /></ExtBtn>
          <ExtBtn><Puzzle size={21} strokeWidth={1.5} /></ExtBtn>
          <ExtBtn><Badger /></ExtBtn>
          <ExtBtn><UBlock>uo</UBlock></ExtBtn>
          <ExtBtn><SBadge>S</SBadge></ExtBtn>
          <ExtBtn><Glasses /></ExtBtn>
          <ExtBtn><MenuIcon size={22} strokeWidth={1.5} /></ExtBtn>
        </ExtRow>
      </NavRow>

      <Main>
        <BrowserRail>
          <RailItem><Spark4 /></RailItem>
          <RailItem><TabSync /></RailItem>
          <RailItem><Clock size={20} strokeWidth={1.6} /></RailItem>
          <RailItem><Star size={20} strokeWidth={1.6} /></RailItem>
          <RailItem><Bitwarden /></RailItem>
          <RailItem><DeepL /></RailItem>
          <RailItem><Tricolor /></RailItem>
          <RailItem><Settings size={21} strokeWidth={1.4} /></RailItem>
        </BrowserRail>

        <Editor>
          <Header>
            <HeadLeft>
              <Logo><Stack s={17} mono />ONLYOFFICE</Logo>
              <HeadBtn><Save size={22} strokeWidth={1.1} /></HeadBtn>
              <HeadBtn><Printer size={22} strokeWidth={1.1} /></HeadBtn>
              <HeadBtn $dim><Undo2 size={22} strokeWidth={1.1} /></HeadBtn>
              <HeadBtn $dim><Redo2 size={22} strokeWidth={1.1} /></HeadBtn>
              <HeadBtn><Ellipsis size={18} strokeWidth={2} /></HeadBtn>
            </HeadLeft>
            <DocTitle>resumen netacad M-1.docx</DocTitle>
            <HeadRight>
              <svg width="25" height="25" viewBox="0 0 25 25">
                <circle cx="12.500" cy="12.500" r="12.500" fill="#15150f" />
                <path d="M5 25c0-7 3-10 7.500-10S20 18 20 25z" fill="#e8e21f" /><circle cx="12.500" cy="9" r="4" fill="#7a5a30" />
              </svg>
            </HeadRight>
          </Header>

          <MenuBar>
            {menus.map(m => (<MenuItem key={m} $active={m === "Vista"}>{m}</MenuItem>))}
            <MenuRight>
              <RightBtn $gap={6}><Pencil size={17} strokeWidth={1.1} />Edición</RightBtn>
              <RightBtn $ml={11}><ChevSmall /></RightBtn>
              <RightBtn $gap={9} $ml={39}><Users size={18} strokeWidth={1.1} />Compartir</RightBtn>
              <RightBtn $ml={34}><FolderShare /></RightBtn>
              <RightBtn $ml={24}><Search size={20} strokeWidth={1.1} /></RightBtn>
            </MenuRight>
          </MenuBar>

          <Panel>
            <IconGrid>
              <Cell $dim><Copy size={20} strokeWidth={1} /></Cell>
              <Cell $dim><Scissors size={20} strokeWidth={1} /></Cell>
              <Cell><Clipboard size={20} strokeWidth={1} /></Cell>
              <Cell><Brush /></Cell>
            </IconGrid>
            <Sep />
            <BigBtn $w={71} $pr={3}><BigIcon><AlignGlyph /></BigIcon>Títulos</BigBtn>
            <Sep />
            <ZoomGroup>
              <ZoomSel>100%<ChevSmall /></ZoomSel>
              <FitRow><FitPage />Ajustar a la página</FitRow>
              <ZoomLabel>Ampliación</ZoomLabel>
              <FitRow $gap={10}><FitWidth />Ajustar al ancho</FitRow>
            </ZoomGroup>
            <Sep />
            <BigBtn $w={90} $ml={8}><BigIcon><Sun size={32} strokeWidth={0.8} /></BigIcon>Tema de<br />la interfaz ⌄</BigBtn>
            <BigBtn $w={90} $ml={1} $on><BigIcon><Contrast /></BigIcon>Documento<br />oscuro</BigBtn>
            <CheckGrid>
              <CheckRow><Box><Check /></Box>Mostrar siempre la barra de herramientas</CheckRow>
              <CheckRow><Box><Check /></Box>Panel izquierdo</CheckRow>
              <CheckRow><Box><Check /></Box>Barra de estado</CheckRow>
              <CheckRow><Box><Check /></Box>Panel derecho</CheckRow>
            </CheckGrid>
            <Sep />
            <RulesCol><CheckRow><Box><Check /></Box>Reglas</CheckRow></RulesCol>
            <Sep />
            <BigBtn $w={74}><BigIcon><MacroGlyph /></BigIcon>Macros</BigBtn>
          </Panel>

          <Workspace>
            <LeftRail>
              <SideIcon><Search size={20} strokeWidth={1.1} /></SideIcon>
              <SideIcon><CommentGlyph /></SideIcon>
              <SideIcon><ChatGlyph /></SideIcon>
              <SideIcon><AlignGlyph /></SideIcon>
              <SideIcon><HornGlyph /></SideIcon>
              <SideIcon><Info size={22} strokeWidth={1.1} /></SideIcon>
            </LeftRail>
            <Canvas>
              <CanvasMain>
                <Corner><CornerMark /></Corner>
                <RulerWrap><HRuler /></RulerWrap>
                <VRuler><VRulerArt /></VRuler>
                <PageWrap>
                  <Page>
                    {doc.map((l, i) => (
                      <DocLine key={i} $mt={l.mt} $pl={l.pl}>
                        {l.m ? <Marker $ml={l.m === "1." ? 29 : 31}>{l.m}</Marker> : null}
                        <Marked t={l.t} />
                      </DocLine>
                    ))}
                  </Page>
                </PageWrap>
              </CanvasMain>
              <Scroll>
                <ScrollBtn><ScrollArrow /></ScrollBtn>
                <ScrollThumb>{[0, 1, 2, 3, 4, 5, 6].map(i => (<Grip key={i} />))}</ScrollThumb>
                <ScrollBtn $end><ScrollArrow $down /></ScrollBtn>
              </Scroll>
            </Canvas>
            <RightRail>
              <SideIcon><Pilcrow size={22} strokeWidth={1.1} /></SideIcon>
              <SideIcon $dim><TableGlyph /></SideIcon>
              <SideIcon $dim><ImageGlyph /></SideIcon>
              <SideIcon $dim><HeaderGlyph /></SideIcon>
              <SideIcon $dim><ShapeGlyph /></SideIcon>
              <SideIcon $dim><ChartGlyph /></SideIcon>
              <SideIcon $dim><ArtGlyph /></SideIcon>
              <SideIcon $dim><MailGlyph /></SideIcon>
            </RightRail>
          </Workspace>

          <StatusBar>
            <StatusText $ml={13}>Página 1 de 5</StatusText>
            <StatusSep $ml={9} />
            <StatusIcon $ml={11} $w={18}><WordCount /></StatusIcon>
            <StatusText $ml={11}>Recuento de palabras</StatusText>
            <StatusRight>
              <StatusSep />
              <StatusText $ml={13} $ls={0.02}>Español – España, alfabetización internacional</StatusText>
              <StatusIcon $ml={6} $w={20}><ChevSmall /></StatusIcon>
              <StatusIcon $ml={3}><Globe size={20} strokeWidth={1.1} /></StatusIcon>
              <SpellBtn $ml={8}><SpellGlyph /></SpellBtn>
              <StatusSep $ml={7} />
              <StatusIcon $ml={11}><TrackGlyph /></StatusIcon>
              <StatusIcon $ml={3} $w={20}><ChevSmall /></StatusIcon>
              <StatusSep $ml={8} />
              <StatusIcon $ml={11}><FitPage /></StatusIcon>
              <StatusIcon $ml={16}><FitWidth /></StatusIcon>
              <StatusIcon $ml={21} $w={16}><Minus size={16} strokeWidth={1.2} /></StatusIcon>
              <StatusText $ml={6} $ls={0.16}>Ampliación 100%</StatusText>
              <StatusIcon $ml={4} $w={24}><Plus size={18} strokeWidth={1.2} /></StatusIcon>
            </StatusRight>
          </StatusBar>
        </Editor>
      </Main>

      <Taskbar>
        <WinBtn><WinLogo /></WinBtn>
        <SearchPill><Search size={24} strokeWidth={1.5} />Buscar</SearchPill>
        <TaskIcons>
          <TaskIcon><TaskView /></TaskIcon>
          <TaskIcon><FolderApp /><TaskDot /></TaskIcon>
          <TaskIcon><Edge /></TaskIcon>
          <TaskIcon><StoreApp /></TaskIcon>
          <TaskIcon $on><Firefox /><TaskDot $on /></TaskIcon>
          <TaskIcon><Teams /><TaskDot /></TaskIcon>
          <TaskIcon><Gecko /><TaskDot /></TaskIcon>
          <TaskIcon><Vbox /><TaskDot /></TaskIcon>
          <TaskIcon><Cat /><TaskDot /></TaskIcon>
          <TaskIcon><Terminal /><TaskDot /></TaskIcon>
          <TaskIcon><Stack s={36} /><TaskDot /></TaskIcon>
        </TaskIcons>
        <Tray>
          <TrayIcon $w={24}><ChevronUp size={20} strokeWidth={2} /></TrayIcon>
          <TrayIcon $w={52}><Cloud size={22} fill="#dfe8ec" strokeWidth={1} /></TrayIcon>
          <TrayIcon $w={30}><Wifi size={20} strokeWidth={1.8} /></TrayIcon>
          <TrayIcon $w={32}><Volume2 size={20} strokeWidth={1.5} /></TrayIcon>
          <TrayIcon $w={28}><TrayBattery /></TrayIcon>
          <Clockbox>17:40<br />25/09/2025</Clockbox>
        </Tray>
      </Taskbar>

      <Highlight />
      <ArrowSvg width="110" height="280" viewBox="520 280 110 280">
        <path d="M536 556L612 300" stroke="#7ffbe4" strokeWidth="4" fill="none" />
        <path d="M616 288L602 308 610 307 617 312z" fill="#7ffbe4" />
      </ArrowSvg>
      <Callout><span>this is the best !!!</span><span>Esto es lo Mejor!!!</span></Callout>
    </Shell>
  );
}
